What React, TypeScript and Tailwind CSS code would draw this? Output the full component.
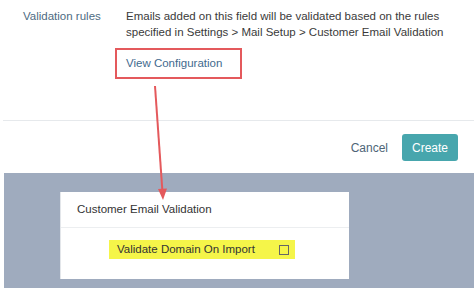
import React from "react";

export default function App() {
  return (
    <div
      className="relative w-[474px] h-[292px] bg-white overflow-hidden text-[11.5px]"
      style={{ fontFamily: '"Liberation Sans", Arial, sans-serif' }}
    >
      {/* Top form section */}
      <div className="pt-[8px]">
        <div className="flex leading-[16px]">
          <div className="w-[126px] pl-[23px] text-[#4d6b82]">Validation rules</div>
          <div className="w-[330px] text-[#3a3a3a]">
            Emails added on this field will be validated based on the rules specified in Settings &gt; Mail Setup &gt; Customer Email Validation
          </div>
        </div>
        <div className="mt-[8px] ml-[115px] w-[127px] h-[31px] border-2 border-[#e4595c] flex items-center pl-[9px] text-[#3f6a8e]">
          View Configuration
        </div>
      </div>

      {/* Divider */}
      <div className="mt-[41px] ml-[3px] h-px bg-[#e6e9ec]" />

      {/* Footer buttons */}
      <div className="flex justify-end items-center pt-[13px] pr-[16px]">
        <span className="mr-[14px] text-[#4e6577] text-[12px]">Cancel</span>
        <button className="w-[56px] h-[27px] rounded-[3px] bg-[#47a6ad] text-white text-[12px]">
          Create
        </button>
      </div>

      {/* Gray overlay region */}
      <div className="mt-[12px] ml-[4px] h-[115px] bg-[#9fabbe] pt-[19px] pl-[56px]">
        <div className="w-[289px] h-[87px] bg-white border-l border-[#e3e6ea] flex flex-col">
          <div className="h-[35px] flex items-center pl-[16px] text-[#333]">
            Customer Email Validation
          </div>
          <div className="h-px bg-[#eceef0]" />
          <div className="pt-[12px] pl-[48px]">
            <div className="w-[186px] h-[19px] bg-[#f5f549] flex items-center pl-[8px] text-[#333]">
              <span className="flex-1">Validate Domain On Import</span>
              <span className="w-[10px] h-[10px] border border-[#666] mr-[6px]" />
            </div>
          </div>
        </div>
      </div>

      {/* Red arrow overlay */}
      <svg className="absolute left-0 top-0 pointer-events-none" width="474" height="292">
        <line x1="155" y1="86" x2="162.4" y2="191" stroke="#e4595c" strokeWidth="2" />
        <polygon points="158,189 167,188.5 163,200" fill="#e4595c" />
      </svg>
    </div>
  );
}
